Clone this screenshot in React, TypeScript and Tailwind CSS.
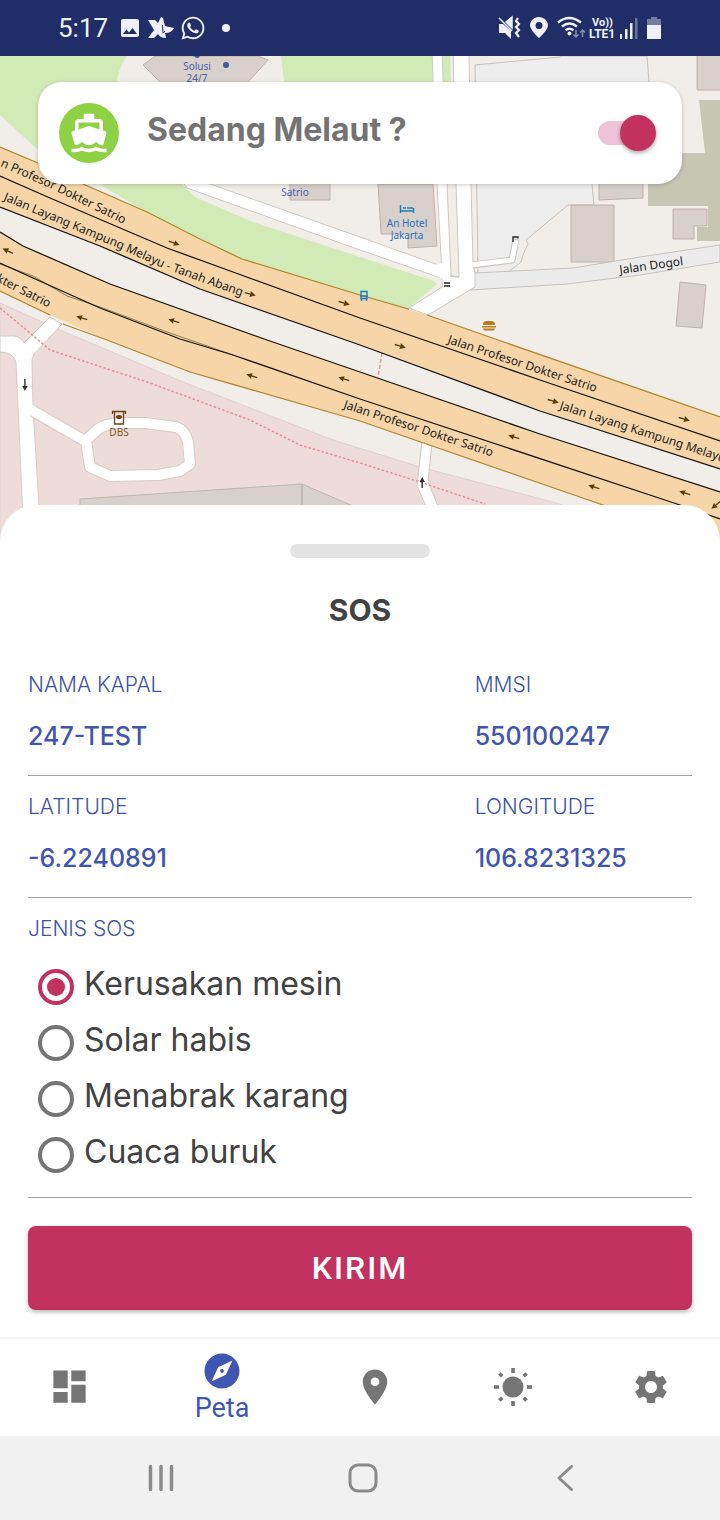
import React, { useState } from "react";
import { MdDashboard, MdDirectionsBoat, MdExplore, MdImage, MdLocationOn, MdSettings } from "react-icons/md";
import { FaWhatsapp } from "react-icons/fa";

const SOS_TYPES = ["Kerusakan mesin", "Solar habis", "Menabrak karang", "Cuaca buruk"];

// position + rotation of the one-way arrows along the roads
const ARROWS: [number, number, number][] = [
  [174, 243, 20], [250, 294, 14], [344, 303, 16], [400, 346, 16], [553, 401, 16], [684, 419, 16],
  [8, 251, 205], [82, 318, 197], [174, 321, 197], [252, 376, 197], [344, 379, 197], [514, 437, 197],
  [594, 487, 197], [685, 493, 197], [716, 505, 140],
];

function StatusBar() {
  return (
    <header className="flex h-14 shrink-0 items-center justify-between bg-[#202d67] pl-[58px] pr-14 text-[#eef1fb]">
      <div className="flex items-center gap-[6px]">
        <time className="mr-1 font-[Roboto,sans-serif] text-[26px] leading-8">5:17</time>
        <MdImage className="h-6 w-6" />
        <svg viewBox="0 0 26 22" className="h-[22px] w-[26px]" fill="currentColor">
          <path d="M0 3 7 3 10 6 13 0 15 1 17 9 26 11Q24 16 17 16L16 14Q18 18 18 21 12 21 10 17L6 21H0L6 13Z" />
          <path d="m14.500 8 .5 8 2-2" stroke="#202d67" strokeWidth="1" fill="none" />
        </svg>
        <FaWhatsapp className="h-[26px] w-[26px]" />
        <span className="ml-[10px] h-2 w-2 rounded-full bg-[#eef1fb]" />
      </div>
      <svg viewBox="0 0 166 26" className="h-[26px] w-[166px]" fill="currentColor">
        {/* muted speaker with vibration */}
        <path d="M1 9h4L13 16v8l-6-6H1Z" />
        <path d="M8 7 14 2v11ZM1 3l13 13" stroke="currentColor" strokeWidth="1.500" />
        <path d="m20 3-2 3 3 3-3 3 3 3-3 3 3 4" fill="none" stroke="currentColor" strokeWidth="2.200" />
        {/* gps */}
        <path fillRule="evenodd" d="M41 2c5 0 9 4 9 8.500C50 15 41 23 41 23s-9-8-9-12.500C32 6 36 2 41 2Zm0 5a3.500 3.500 0 1 0 0 7 3.500 3.500 0 0 0 0-7Z" />
        {/* wifi */}
        <g fill="none" stroke="currentColor" strokeWidth="2.400">
          <path d="M60 7.500q11-9 23 0M64 11.500q7.500-6 15 0M67.500 15.200q4-3 8 0" />
        </g>
        <circle cx="71.500" cy="18.500" r="2" />
        <path d="M78 15v7m-2.500-2.500L78 22l2.500-2.500M84.500 22v-7M82 17.500l2.500-2.500 2.500 2.500" fill="none" stroke="currentColor" strokeWidth="1.500" opacity=".5" />
        <text x="94" y="11" fontSize="11" fontWeight="700" fontFamily="Roboto, sans-serif">Vo))</text>
        <text x="91" y="23" fontSize="12" fontWeight="700" fontFamily="Roboto, sans-serif">LTE1</text>
        <path d="M122 19h2v5h-2ZM127 14h2.500v10H127ZM132 8h2.500v16H132Z" />
        <path d="M137 3h2.500v21H137Z" opacity=".35" />
        <path d="M149 4h4V2h6v2h4v6h-14Z" opacity=".4" />
        <path d="M149 10h14v14h-14Z" />
      </svg>
    </header>
  );
}

function StreetMap() {
  return (
    <svg
      viewBox="0 56 720 484"
      preserveAspectRatio="xMidYMin slice"
      className="absolute inset-0 h-full w-full"
      fontFamily="'Noto Sans', sans-serif"
      role="img"
      aria-label="Peta"
    >
      <rect y="56" width="720" height="484" fill="#f1eee9" />

      {/* parks */}
      <g fill="#d2eab6">
        <path d="M0 56H127Q117 68 114 100L120 170H75L38 150 0 115Z" />
        <path d="M281 56H432L434 150H292ZM442 56h8l3 94h-8Z" />
        <path d="M75 170 180 182 195 197 250 221 360 257 434 281 437 284 409 308 360 295 242 259 150 214Z" />
      </g>

      {/* school ground and parking */}
      <path d="M648 153V206H708V227H697V241H725V100H699L705 153Z" fill="#c7c6b3" />
      <path d="M475 65 560 57 562 56H647L649 82 592 184 594 205H568L526 240 528 244 523 255 521 262 507 273 478 274Z" fill="#ededee" stroke="#c9beba" />

      {/* pink commercial area */}
      <path d="M0 303 60 330 183 382 333 440 420 467 560 504 640 540H0Z" fill="#eedcdb" stroke="#dfcfd1" />

      <g fill="#d8d0ca" stroke="#c2b0aa">
        <path d="M143 65 155 56H258L268 60 248 82V90H168Z" />
        <path d="M290 170H330V200H290ZM378 184H433L437 246 408 248V234H381Z" />
        <path d="M599 180H643V198L599 200ZM571 205H614V262H571Z" />
        <path d="M673 209H707V226H694V239H673ZM680 282 706 285 702 328 676 326ZM697 50H725V90H697Z" />
        <path d="M80 499 302 484V540H80ZM302 484 390 522V540H302Z" stroke="#bfb5ae" />
      </g>

      {/* small streets */}
      <path d="M475 273 573 268 640 257 720 245V262L640 275 567 284 470 290Z" fill="#ebebec" stroke="#c5c0be" />
      <g fill="#fff" stroke="#cfc8c4">
        <path d="M180 178 210 184 360 237 441 266V278L360 250 187 188Z" />
        <path d="M453 50H469L471 184 473 263 475 274V287L428 315 409 308 442 287 447 275 459 277 456 184Z" />
        <path d="M432 50H442L447 184 451 274V284H442V274L437 184Z" />
        <path d="M0 336H14Q21 337 24 343L50 317 62 324 34 354 32 360 33 407 41 540H24L16 363Q14 352 0 352Z" stroke="#d9caca" />
        <path d="M422 440 432 443 428 482 452 540H441L417 486Z" />
      </g>
      {/* clears the outlines where the lanes meet */}
      <path d="M434 265 442 263 450 276 459 278V284L443 292V279L434 275Z" fill="#fff" />
      <path d="M450 276 459 277.500" stroke="#cfc8c4" />
      <g fill="none" strokeLinejoin="round">
        <path d="M473 265 512 260 516 239" stroke="#c8c3c0" strokeWidth="7" />
        <path d="M470 265 512 260 516 240" stroke="#fff" strokeWidth="5" />
        <path d="M33 411 85 441 98 429Q106 424 118 423L145 423 176 427Q185 430 188 442L190 464 180 471 158 475 110 476 90 467 86 441" stroke="#d9caca" strokeWidth="12" />
        <path d="M28 408 85 441 98 429Q106 424 118 423L145 423 176 427Q185 430 188 442L190 464 180 471 158 475 110 476 90 467 86 441" stroke="#fff" strokeWidth="10" />
        <path d="M0 308 30 333 50 350 150 383 250 420 300 445 360 463 420 482 485 504" stroke="#ea8f92" strokeWidth="1.500" strokeDasharray="2.500 2" />
        <path d="M382 353 378 377" stroke="#ea8f92" strokeWidth="1.500" strokeDasharray="4 2" />
      </g>

      {/* main roads */}
      <path d="M0 147 38 163 83 184 147 212 200 239 242 259 360 295 427 315 498 340 720 417V469L540 411 360 345 200 289 100 246 0 207Z" fill="#f6d6a9" />
      <path d="M0 232 23 246 110 284 267 340 360 372 540 434 720 492V545L603 505 360 421 190 372 107 340 50 315 0 291Z" fill="#f6d6a9" />
      <g fill="none" stroke="#b0862b" strokeWidth="1.300">
        <path d="M0 147 38 163 83 184 147 212 200 239 242 259 360 295 409 309M427 315 498 340 720 417" />
        <path d="M0 291 50 315M63 324 107 340 190 372 360 421 603 505 690 535" />
        <path d="M0 264 33 276 67 296 100 307 167 332 233 355" stroke="#8d7b4a" strokeWidth="1" />
      </g>
      <g fill="none" stroke="#17130d" strokeWidth="1.300">
        <path d="M0 176 50 198 167 248 233 272 360 318 540 380 720 441" />
        <path d="M0 207 100 246 200 289 360 345 540 411 720 469" />
        <path d="M0 232 23 246 110 284 267 340 360 372 540 434 720 492" />
        <path d="M0 263 33 278 100 308 180 339 233 355 360 399 677 504 720 519" />
      </g>

      {ARROWS.map(([x, y, angle]) => (
        <g key={`${x}-${y}`} transform={`translate(${x} ${y}) rotate(${angle})`} fill="#5a3c07">
          <path d="M-5.500-.7H.5L0-3 6 0 0 3 .5.7H-5.500Z" />
        </g>
      ))}
      <path d="M24.200 379h1.400v7h2l-2.700 5-2.700-5h2ZM421.500 488h1.400v-6h2l-2.700-5-2.700 5h2Z" fill="#333" />
      <path d="M444 283h6m-6 3h6M513 242v-5h5v1.500" fill="none" stroke="#222" strokeWidth="1.300" />

      {/* street names follow the road curve */}
      <defs>
        <path id="road-a" d="M0 166 50 188 140 232" />
        <path id="road-b" d="M3 200 70 228 123 250 163 268 207 284 260 303" />
        <path id="road-c" d="M447 343 595 392 640 408" />
        <path id="road-d" d="M559 409 640 435 720 461 780 481" />
        <path id="road-e" d="M343 408 493 457 540 473" />
        <path id="road-f" d="M-4 281 49 308 80 323" />
      </defs>
      <g fontSize="12" fill="#1d1b19">
        <text><textPath href="#road-a">n Profesor Dokter Satrio</textPath></text>
        <text><textPath href="#road-b">Jalan Layang Kampung Melayu - Tanah Abang</textPath></text>
        <text><textPath href="#road-c">Jalan Profesor Dokter Satrio</textPath></text>
        <text><textPath href="#road-d">Jalan Layang Kampung Melayu</textPath></text>
        <text><textPath href="#road-e">Jalan Profesor Dokter Satrio</textPath></text>
        <text><textPath href="#road-f">kter Satrio</textPath></text>
        <text transform="translate(620 274) rotate(-8)">Jalan Dogol</text>
      </g>

      {/* places */}
      <g fontSize="10" textAnchor="middle" fill="#4a63a8">
        <text x="197" y="70">Solusi</text>
        <text x="197" y="82">24/7</text>
        <text x="295" y="196">Satrio</text>
        <text x="407" y="227" fill="#2b6fc4">An Hotel</text>
        <text x="407" y="239" fill="#2b6fc4">Jakarta</text>
        <text x="119" y="436" fill="#7a5a22">DBS</text>
      </g>
      <circle cx="226" cy="65" r="3" fill="#4059a0" />
      <circle cx="197" cy="55" r="3" fill="#4059a0" />
      <path d="M400.500 205v8m0-2h13v2m0-5v4M403 208h3m1 0h6" fill="none" stroke="#1a7fc0" strokeWidth="1.500" />
      <path d="M361 291.500h6v7h-6ZM360 296h8M361.500 299v2m5-2v2" fill="none" stroke="#1a7fc0" strokeWidth="1.400" />
      <path d="M483 325q0-4 4-4h4q4 0 4 4ZM482 326h14v1.500h-14ZM483 328.500h12q0 2-2 2h-8q-2 0-2-2Z" fill="#b67a1d" />
      <path d="M112.500 414v-2.500h13v2.500M114.500 412v12h9v-12" fill="none" stroke="#6d4310" strokeWidth="1.300" />
      <ellipse cx="119" cy="417" rx="3" ry="2" fill="#6d4310" />
    </svg>
  );
}

function DataField({ label, value }: { label: string; value: string }) {
  return (
    <div>
      <dt className="text-[21px] font-light leading-[30px] text-[#3d53a4]">{label}</dt>
      <dd className="mt-[18px] text-[25px] font-medium leading-9 text-[#3f55ae]">{value}</dd>
    </div>
  );
}

function SunIcon() {
  return (
    <svg viewBox="0 0 40 40" className="h-10 w-10" fill="currentColor">
      <circle cx="20" cy="20" r="10.500" />
      {[0, 45, 90, 135, 180, 225, 270, 315].map((a) => (
        <rect key={a} x="18.200" y={a % 90 ? 0.8 : 1} width="3.600" height={a % 90 ? 4 : 5} transform={`rotate(${a} 20 20)`} />
      ))}
    </svg>
  );
}

export default function App() {
  const [sailing, setSailing] = useState(true);
  const [sosType, setSosType] = useState(SOS_TYPES[0]);

  return (
    <div className="flex min-h-screen flex-col bg-white font-[Inter,sans-serif]">
      <StatusBar />

      <section className="relative h-[484px] shrink-0 overflow-hidden">
        <StreetMap />
        <div className="relative mx-[38px] mt-[26px] flex h-[102px] items-center rounded-3xl bg-white pl-[21px] pr-[26px] shadow-[0_1px_4px_rgba(0,0,0,0.2)]">
          <div className="flex h-[60px] w-[60px] items-center justify-center rounded-full bg-[#8fd145] text-white">
            <MdDirectionsBoat className="h-[42px] w-[42px]" />
          </div>
          <label htmlFor="sailing" className="ml-7 flex-1 pb-[6px] text-[32px] font-bold leading-10 text-[#737373]">
            Sedang Melaut ?
          </label>
          <input
            id="sailing"
            type="checkbox"
            role="switch"
            checked={sailing}
            onChange={(e) => setSailing(e.target.checked)}
            className="relative h-9 w-[58px] cursor-pointer appearance-none before:absolute before:left-0 before:top-[6px] before:h-6 before:w-12 before:rounded-full before:bg-gray-300 after:absolute after:left-0 after:top-0 after:h-9 after:w-9 after:rounded-full after:bg-gray-100 after:shadow-[0_2px_4px_rgba(0,0,0,0.35)] checked:before:bg-[#edc3d5] checked:after:left-[22px] checked:after:bg-[#c2315f]"
          />
        </div>
      </section>

      <main className="relative -mt-[35px] flex-1 rounded-t-[36px] bg-white px-7 pb-[27px] pt-[39px]">
        <div className="mx-auto h-[14px] w-[140px] rounded-full bg-[#e3e3e3]" />
        <h1 className="mt-8 text-center text-[30px] font-bold leading-10 text-[#424242]">SOS</h1>

        <dl className="mt-10 grid grid-cols-[2fr_1fr] gap-x-3 border-b border-[#a3a3a3] pb-[21px]">
          <DataField label="NAMA KAPAL" value="247-TEST" />
          <DataField label="MMSI" value="550100247" />
        </dl>
        <dl className="mt-4 grid grid-cols-[2fr_1fr] gap-x-3 border-b border-[#a3a3a3] pb-[21px]">
          <DataField label="LATITUDE" value="-6.2240891" />
          <DataField label="LONGITUDE" value="106.8231325" />
        </dl>

        <fieldset className="mt-4 border-b border-[#a3a3a3] pb-[14px]">
          <legend className="text-[21px] font-light leading-[30px] text-[#3d53a4]">JENIS SOS</legend>
          <div className="mt-[15px]">
            {SOS_TYPES.map((type) => (
              <label key={type} className="flex h-14 cursor-pointer items-center gap-[10px] pl-[10px]">
                <input
                  type="radio"
                  name="sos-type"
                  value={type}
                  checked={sosType === type}
                  onChange={() => setSosType(type)}
                  className="flex h-9 w-9 shrink-0 appearance-none items-center justify-center rounded-full border-4 border-[#757575] checked:border-[#c2315f] checked:before:h-[18px] checked:before:w-[18px] checked:before:rounded-full checked:before:bg-[#c2315f]"
                />
                <span className="pb-[6px] text-[32px] leading-10 text-[#424242]">{type}</span>
              </label>
            ))}
          </div>
        </fieldset>

        <button
          type="button"
          className="mt-7 h-[84px] w-full rounded-lg bg-[#c2315f] font-[Roboto,sans-serif] text-[32px] font-medium tracking-[2px] text-white shadow-[0_2px_4px_rgba(0,0,0,0.3)]"
        >
          KIRIM
        </button>
      </main>

      <nav className="flex h-[99px] shrink-0 items-center border-t-2 border-[#f5f5f5] bg-white pb-[2px] text-[#757575]">
        <a href="#dashboard" aria-label="Dashboard" className="flex flex-1 justify-center">
          <MdDashboard className="h-[43px] w-[43px]" />
        </a>
        <a href="#peta" className="flex w-[168px] flex-col items-center font-[Roboto,sans-serif] text-[27px] leading-8 text-[#4057b2]">
          <MdExplore className="h-[42px] w-[42px]" />
          Peta
        </a>
        <a href="#lokasi" aria-label="Lokasi" className="flex flex-1 justify-center">
          <MdLocationOn className="h-[42px] w-[42px]" />
        </a>
        <a href="#cuaca" aria-label="Cuaca" className="flex flex-1 justify-center">
          <SunIcon />
        </a>
        <a href="#pengaturan" aria-label="Pengaturan" className="flex flex-1 justify-center">
          <MdSettings className="h-10 w-10" />
        </a>
      </nav>

      <footer className="flex h-[84px] shrink-0 items-center bg-[#f1f1f1] pl-[60px] pr-[54px] text-[#8a8a8a]">
        <button type="button" aria-label="Recents" className="flex flex-1 justify-center">
          <svg viewBox="0 0 30 30" className="h-[30px] w-[30px]" fill="none" stroke="currentColor" strokeWidth="3.500" strokeLinecap="round">
            <path d="M4.500 3.500v23M15 3.500v23M25.500 3.500v23" />
          </svg>
        </button>
        <button type="button" aria-label="Home" className="flex flex-1 justify-center">
          <svg viewBox="0 0 30 30" className="h-[30px] w-[30px]" fill="none" stroke="currentColor" strokeWidth="3">
            <rect x="2" y="2" width="26" height="26" rx="8" />
          </svg>
        </button>
        <button type="button" aria-label="Back" className="flex flex-1 justify-center">
          <svg viewBox="0 0 30 30" className="h-[30px] w-[30px]" fill="none" stroke="currentColor" strokeWidth="3" strokeLinecap="round" strokeLinejoin="round">
            <path d="M21.500 3.500 9 15l12.500 11.500" />
          </svg>
        </button>
      </footer>
    </div>
  );
}
